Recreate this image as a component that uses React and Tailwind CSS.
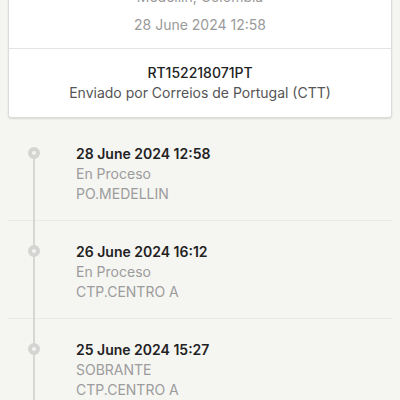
import React from "react";

const events = [
  { date: "28 June 2024 12:58", status: "En Proceso", place: "PO.MEDELLIN" },
  { date: "26 June 2024 16:12", status: "En Proceso", place: "CTP.CENTRO A" },
  { date: "25 June 2024 15:27", status: "SOBRANTE", place: "CTP.CENTRO A" },
];

export default function App() {
  return (
    <div
      className="w-[400px] h-[400px] overflow-hidden bg-[#f5f5f2] text-[14px]"
      style={{ fontFamily: "Inter, 'Noto Sans', sans-serif" }}
    >
      <div className="mx-2 -mt-[27px] bg-white border border-[#dcdcda] rounded-[3px] shadow-[0_1px_2px_rgba(0,0,0,0.12)]">
        <div className="pt-[13px] pb-[13px] text-center text-[#9a9a9a]">
          <div className="leading-5 mb-[8px]">Medellín, Colombia</div>
          <div className="leading-5">28 June 2024 12:58</div>
        </div>
        <div className="border-t border-[#e4e4e2] pt-[14px] pb-[14px] text-center">
          <div className="leading-5 font-medium text-[#222]">RT152218071PT</div>
          <div className="leading-5 text-[#555]">Enviado por Correios de Portugal (CTT)</div>
        </div>
      </div>

      <div className="mx-2 mt-[5px]">
        {events.map((e, i) => (
          <div key={i} className="flex border-b border-[#e9e9e5]">
            <div className="relative w-[68px] shrink-0">
              <div
                className={
                  i === 0
                    ? "absolute left-[25px] top-[30px] bottom-[-1px] w-[2px] bg-[#d6d6d4]"
                    : "absolute left-[25px] top-0 bottom-[-1px] w-[2px] bg-[#d6d6d4]"
                }
              />
              <div className="absolute left-[20px] top-[24px] w-3 h-3 rounded-full border-[4px] border-[#d4d4d2] bg-[#f3f3f0]" />
            </div>
            <div className="pt-[21px] pb-[16px]">
              <div className="leading-5 font-semibold text-[#222]">{e.date}</div>
              <div className="leading-5 text-[#9c9c9c]">{e.status}</div>
              <div className="leading-5 text-[#9c9c9c]">{e.place}</div>
            </div>
          </div>
        ))}
      </div>
    </div>
  );
}
